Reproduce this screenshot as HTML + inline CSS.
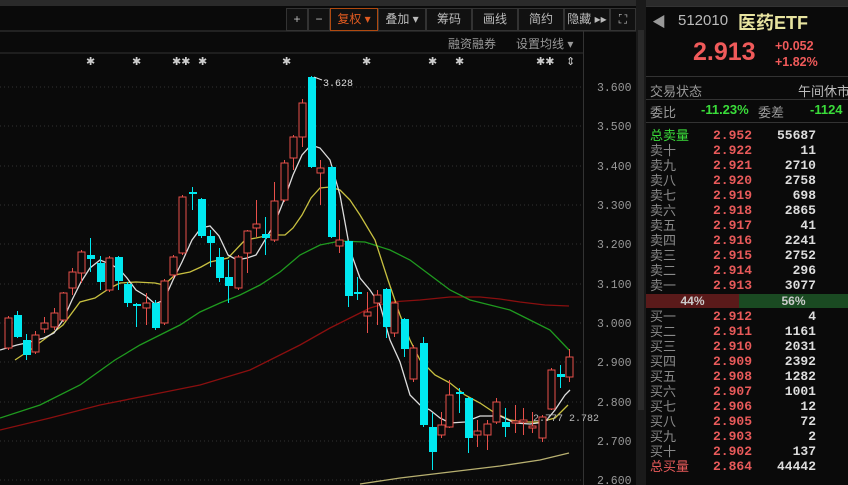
<!DOCTYPE html><html><head><meta charset="utf-8"><style>
body{margin:0;width:848px;height:485px;background:#0a0a0a;overflow:hidden;position:relative;font-family:"Liberation Sans","Noto Sans CJK SC",sans-serif;}
.a{position:absolute;white-space:nowrap}
.tb{position:absolute;top:8px;height:21px;border:1px solid #333;background:#111;color:#bbb;font-size:12px;line-height:21px;text-align:center}
.r{position:absolute;left:648px;width:200px;height:15px;font-size:13px;line-height:15px}
.r .l{position:absolute;left:2px;color:#8a8a8a}
.r .p{position:absolute;right:96px;color:#e85a5a;font-family:"Liberation Mono",monospace;font-weight:bold}
.r .v{position:absolute;right:32px;color:#ddd;font-family:"Liberation Mono",monospace;font-weight:bold}
</style></head><body>
<div class="a" style="left:0;top:0;width:848px;height:6px;background:#2a2a2a"></div>
<div class="a" style="left:0;top:30px;width:636px;height:2px;background:#222"></div>
<div class="a" style="left:0;top:52px;width:584px;height:2px;background:#1e1e1e"></div>
<div class="tb" style="left:286px;width:20px">+</div>
<div class="tb" style="left:308px;width:20px">−</div>
<div class="tb" style="left:330px;width:46px;border-color:#b04a10;color:#e05a20">复权 ▾</div>
<div class="tb" style="left:378px;width:46px">叠加 ▾</div>
<div class="tb" style="left:426px;width:44px">筹码</div>
<div class="tb" style="left:472px;width:44px">画线</div>
<div class="tb" style="left:518px;width:44px">简约</div>
<div class="tb" style="left:564px;width:44px">隐藏 ▸▸</div>
<div class="tb" style="left:610px;width:24px">⛶</div>
<div class="a" style="left:448px;top:35px;color:#999;font-size:12px">融资融券</div>
<div class="a" style="left:516px;top:35px;color:#999;font-size:12px">设置均线 ▾</div>
<div class="a" style="left:583px;top:31px;width:1px;height:454px;background:#333"></div>
<div class="a" style="left:636px;top:0;width:10px;height:485px;background:#1a1a1a"></div>
<div class="a" style="left:638px;top:30px;width:6px;height:380px;background:#2a2a2a"></div>
<svg class="a" style="left:0;top:0" width="640" height="485">
<g fill="#ccc" font-size="11">
<text x="86" y="65">✱</text><text x="132" y="65">✱</text><text x="172" y="65">✱✱</text><text x="198" y="65">✱</text><text x="282" y="65">✱</text><text x="362" y="65">✱</text><text x="428" y="65">✱</text><text x="455" y="65">✱</text><text x="536" y="65">✱✱</text><text x="566" y="65">⇕</text>
</g>
<g stroke="#333" stroke-dasharray="1,3" stroke-width="1">
<line x1="0" x2="583" y1="87" y2="87"/><line x1="0" x2="583" y1="126" y2="126"/><line x1="0" x2="583" y1="166" y2="166"/><line x1="0" x2="583" y1="205" y2="205"/><line x1="0" x2="583" y1="244" y2="244"/><line x1="0" x2="583" y1="284" y2="284"/><line x1="0" x2="583" y1="323" y2="323"/><line x1="0" x2="583" y1="362" y2="362"/><line x1="0" x2="583" y1="402" y2="402"/><line x1="0" x2="583" y1="441" y2="441"/><line x1="0" x2="583" y1="480" y2="480"/>
</g>
<g fill="#999" font-family="Liberation Mono,monospace" font-size="11.5">
<text x="597" y="91">3.600</text><text x="597" y="130">3.500</text><text x="597" y="170">3.400</text><text x="597" y="209">3.300</text><text x="597" y="248">3.200</text><text x="597" y="288">3.100</text><text x="597" y="327">3.000</text><text x="597" y="366">2.900</text><text x="597" y="406">2.800</text><text x="597" y="445">2.700</text><text x="597" y="484">2.600</text>
</g>
<g fill="none" stroke-width="1.3">
<polyline stroke="#8a0f0f" points="0,430 50,418 100,405 150,395 200,385 250,370 300,345 330,328 350,318 370,308 390,302 420,300 450,297 480,297 500,299 520,302 545,305 569,306"/>
<polyline stroke="#1f9a1f" points="0,418 40,405 80,385 115,360 140,345 160,335 180,325 200,312 220,303 240,295 260,285 280,272 300,255 320,245 340,241 365,242 390,250 410,260 430,275 450,290 470,300 490,305 510,310 530,320 550,330 569,350"/>
<polyline stroke="#b8b070" points="360,484 400,478 450,472 500,466 540,460 569,453"/>
<polyline stroke="#c8c040" points="15,360 30,350 50,335 63,325 80,302 95,298 110,288 120,283 136,282 155,283 164,285 175,275 190,272 201,267 210,262 228,258 245,240 256,238 270,235 285,235 293,228 302,215 311,198 320,188 330,187 340,190 350,200 360,215 375,240 388,280 400,315 410,340 420,360 435,375 450,383 465,395 480,403 495,413 510,420 525,422 540,422 555,418 568,405"/>
<polyline stroke="#ddd" points="0,350 17,345 26,343 44,338 54,333 63,320 72,300 81,282 90,268 100,260 112,265 120,270 127,278 136,290 146,296 155,304 164,300 173,280 182,262 192,240 201,228 210,226 219,236 228,255 237,260 247,258 256,255 265,240 274,225 284,200 293,175 302,155 311,145 320,148 330,160 340,195 350,250 360,278 370,290 380,305 390,340 400,362 410,395 420,405 430,410 440,418 450,423 465,422 480,416 500,416 515,423 530,424 545,422 555,410 565,395 570,390"/>
</g>
<g id="c"></g>
<text x="323" y="86" fill="#ddd" font-size="10" font-family="Liberation Mono,monospace">3.628</text>
<line x1="314" y1="77" x2="322" y2="80" stroke="#ddd"/>
<text x="533" y="421" fill="#bbb" font-size="10" font-family="Liberation Mono,monospace">2.777 2.782</text>
</svg>
<script>
var d=[[8,318,348,316,350,1],[17,315,337,311,338,0],[26,340,355,334,360,0],[35,335,352,331,354,1],[44,323,329,317,333,1],[54,313,327,308,330,1],[63,293,320,292,322,1],[72,272,288,268,295,1],[81,252,273,250,283,1],[90,255,259,238,272,0],[100,263,282,256,290,0],[109,258,290,256,292,1],[118,257,281,256,290,0],[127,284,303,282,307,0],[136,304,306,303,327,0],[146,303,308,293,325,1],[155,303,328,300,330,0],[164,281,323,279,325,1],[173,257,275,255,278,1],[182,197,253,195,255,1],[192,192,194,187,210,0],[201,199,236,198,238,0],[210,236,243,230,267,0],[219,257,278,248,282,0],[228,277,286,260,303,0],[238,257,288,255,290,1],[247,231,253,230,273,1],[256,224,228,200,237,1],[265,234,238,217,255,0],[274,201,240,182,242,1],[284,163,200,160,202,1],[293,137,158,135,170,1],[302,103,137,99,147,1],[311,77,167,76,168,0],[320,168,173,160,205,1],[331,167,237,166,238,0],[339,240,246,220,253,1],[348,241,296,240,307,0],[357,292,294,277,300,0],[367,312,316,292,333,1],[377,295,303,290,325,1],[386,289,327,288,338,0],[394,303,333,302,337,1],[404,319,349,318,357,0],[413,348,379,345,382,1],[423,343,425,337,427,0],[432,427,452,413,470,0],[441,425,435,412,438,1],[449,395,427,380,428,1],[459,392,394,388,413,0],[468,398,438,397,453,0],[477,431,435,420,447,1],[487,424,435,420,450,1],[496,402,422,398,424,1],[505,422,427,408,437,0],[515,421,423,405,433,1],[523,420,422,408,435,1],[532,426,428,412,433,1],[542,417,438,415,442,1],[551,370,409,368,410,1],[560,374,377,365,388,0],[569,357,377,349,382,1]];
var s='';d.forEach(function(c){var x=c[0],col=c[5]?'#e8504a':'#00e8f0';s+='<line x1="'+(x+.5)+'" x2="'+(x+.5)+'" y1="'+c[3]+'" y2="'+c[4]+'" stroke="'+col+'"/>';var h=Math.max(c[2]-c[1],1.5);s+=c[5]?'<rect x="'+(x-3)+'" y="'+c[1]+'" width="7" height="'+h+'" fill="#0a0a0a" stroke="'+col+'"/>':'<rect x="'+(x-3)+'" y="'+c[1]+'" width="8" height="'+h+'" fill="'+col+'"/>';});
document.getElementById('c').innerHTML=s;
</script>
<div class="a" style="left:646px;top:6px;width:202px;height:1px;background:#333"></div>
<div class="a" style="left:652px;top:12px;color:#999;font-size:14px">◀</div>
<div class="a" style="left:678px;top:12px;color:#bbb;font-size:15px">512010</div>
<div class="a" style="left:738px;top:9px;color:#e8e4a0;font-size:18px;font-weight:bold">医药ETF</div>
<div class="a" style="left:693px;top:38px;color:#f05a5a;font-size:25px;font-weight:bold">2.913</div>
<div class="a" style="left:775px;top:38px;color:#f05a5a;font-size:12.5px;font-weight:bold;line-height:16px">+0.052<br>+1.82%</div>
<div class="a" style="left:646px;top:76px;width:202px;height:1px;background:#333"></div>
<div class="a" style="left:650px;top:81px;color:#999;font-size:13px">交易状态</div>
<div class="a" style="left:798px;top:81px;color:#bbb;font-size:13px">午间休市</div>
<div class="a" style="left:646px;top:99px;width:202px;height:1px;background:#333"></div>
<div class="a" style="left:650px;top:102px;color:#999;font-size:13px">委比</div>
<div class="a" style="left:701px;top:102px;color:#3adc3a;font-size:13px;font-weight:bold">-11.23%</div>
<div class="a" style="left:758px;top:102px;color:#999;font-size:13px">委差</div>
<div class="a" style="left:810px;top:102px;color:#3adc3a;font-size:13px;font-weight:bold">-1124</div>
<div class="a" style="left:646px;top:122px;width:202px;height:1px;background:#333"></div>
<div class="r" style="top:128px"><span class="l" style="color:#3adc3a">总卖量</span><span class="p">2.952</span><span class="v">55687</span></div>
<div class="r" style="top:143px"><span class="l">卖十</span><span class="p">2.922</span><span class="v">11</span></div>
<div class="r" style="top:158px"><span class="l">卖九</span><span class="p">2.921</span><span class="v">2710</span></div>
<div class="r" style="top:173px"><span class="l">卖八</span><span class="p">2.920</span><span class="v">2758</span></div>
<div class="r" style="top:188px"><span class="l">卖七</span><span class="p">2.919</span><span class="v">698</span></div>
<div class="r" style="top:203px"><span class="l">卖六</span><span class="p">2.918</span><span class="v">2865</span></div>
<div class="r" style="top:218px"><span class="l">卖五</span><span class="p">2.917</span><span class="v">41</span></div>
<div class="r" style="top:233px"><span class="l">卖四</span><span class="p">2.916</span><span class="v">2241</span></div>
<div class="r" style="top:248px"><span class="l">卖三</span><span class="p">2.915</span><span class="v">2752</span></div>
<div class="r" style="top:263px"><span class="l">卖二</span><span class="p">2.914</span><span class="v">296</span></div>
<div class="r" style="top:278px"><span class="l">卖一</span><span class="p">2.913</span><span class="v">3077</span></div>
<div class="a" style="left:646px;top:294px;width:93px;height:14px;background:#5a1a1a;color:#ccc;font-size:12px;line-height:14px;text-align:center;font-weight:bold">44%</div>
<div class="a" style="left:739px;top:294px;width:109px;height:14px;background:#1a4a22;color:#ccc;font-size:12px;line-height:14px;text-align:center;font-weight:bold">56%</div>
<div class="r" style="top:309px"><span class="l">买一</span><span class="p">2.912</span><span class="v">4</span></div>
<div class="r" style="top:324px"><span class="l">买二</span><span class="p">2.911</span><span class="v">1161</span></div>
<div class="r" style="top:339px"><span class="l">买三</span><span class="p">2.910</span><span class="v">2031</span></div>
<div class="r" style="top:354px"><span class="l">买四</span><span class="p">2.909</span><span class="v">2392</span></div>
<div class="r" style="top:369px"><span class="l">买五</span><span class="p">2.908</span><span class="v">1282</span></div>
<div class="r" style="top:384px"><span class="l">买六</span><span class="p">2.907</span><span class="v">1001</span></div>
<div class="r" style="top:399px"><span class="l">买七</span><span class="p">2.906</span><span class="v">12</span></div>
<div class="r" style="top:414px"><span class="l">买八</span><span class="p">2.905</span><span class="v">72</span></div>
<div class="r" style="top:429px"><span class="l">买九</span><span class="p">2.903</span><span class="v">2</span></div>
<div class="r" style="top:444px"><span class="l">买十</span><span class="p">2.902</span><span class="v">137</span></div>
<div class="r" style="top:459px"><span class="l" style="color:#e85a5a">总买量</span><span class="p">2.864</span><span class="v">44442</span></div>
</body></html>
